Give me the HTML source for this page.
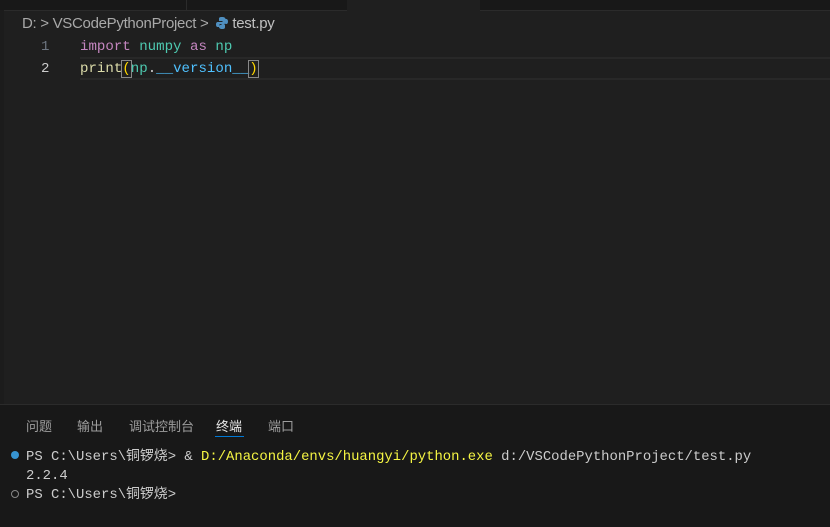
<!DOCTYPE html>
<html><head><meta charset="utf-8"><style>
body{margin:0;width:830px;height:526px;background:#1f1f1f;overflow:hidden;position:relative;font-family:"Liberation Sans","Noto Sans CJK SC",sans-serif}
.abs{position:absolute}
.mono{font-family:"Liberation Mono","Noto Sans CJK SC",monospace;font-size:14.1px;white-space:pre}
</style></head><body>
<div class="abs" style="left:0;top:0;width:830px;height:10px;background:#181818;border-bottom:1px solid #2b2b2b"></div>
<div class="abs" style="left:186px;top:0;width:1px;height:10px;background:#2b2b2b"></div>
<div class="abs" style="left:347px;top:0;width:133px;height:11px;background:#1f1f1f"></div>
<div class="abs" style="left:0;top:85px;width:4px;height:22px;background:#2a2a2a"></div>
<div class="abs" style="left:0;top:10px;width:4px;height:395px;background:#1c1c1c"></div>
<div class="abs" style="left:22px;top:15px;font-size:15px;letter-spacing:-0.3px;color:#a9a9a9">D: &gt; VSCodePythonProject &gt; <svg width="14" height="14" viewBox="0 0 14 14" style="vertical-align:-2px;margin:0 3px"><path d="M7 1C4 1 4 2 4 3v2h3.5v1H3C1.5 6 1 7 1 8.5S1.5 11 3 11h1V9.5C4 8.5 5 8 6 8h3c1 0 1.5-.5 1.5-1.5V3c0-1-1-2-3.5-2z" fill="#4f8fc0"/><path d="M7 13c3 0 3-1 3-2V9H6.5V8H11c1.5 0 2-1 2-2.5S12.5 3 11 3h-.5v3.5C10.5 8 9.5 9 8 9H5c-.5 0-1 .5-1 1v1c0 1 1 2 3 2z" fill="#4f8fc0"/></svg><span style="color:#c0c0c0">test.py</span></div>
<div class="abs" style="left:80px;top:57px;width:750px;height:19px;border-top:2px solid #282828;border-bottom:2px solid #282828"></div>
<div class="abs mono" style="left:41px;top:39px;color:#6e7681">1</div>
<div class="abs mono" style="left:41px;top:61px;color:#cccccc">2</div>
<div class="abs mono" style="left:80px;top:39px"><span style="color:#c586c0">import</span> <span style="color:#4ec9b0">numpy</span> <span style="color:#c586c0">as</span> <span style="color:#4ec9b0">np</span></div>
<div class="abs mono" style="left:80px;top:61px"><span style="color:#dcdcaa">print</span><span style="color:#ffd700;outline:1px solid #888">(</span><span style="color:#4ec9b0">np</span><span style="color:#ccc">.</span><span style="color:#4fc1ff">__version__</span><span style="color:#ffd700;outline:1px solid #888">)</span></div>
<div class="abs" style="left:0;top:404px;width:830px;height:122px;background:#181818;border-top:1px solid #2b2b2b"></div>
<div class="abs" style="left:26px;top:416px;font-size:13px;color:#9d9d9d">问题</div>
<div class="abs" style="left:77px;top:416px;font-size:13px;color:#9d9d9d">输出</div>
<div class="abs" style="left:129px;top:416px;font-size:13px;color:#9d9d9d">调试控制台</div>
<div class="abs" style="left:216px;top:416px;font-size:13px;color:#e7e7e7">终端</div>
<div class="abs" style="left:215px;top:436px;width:29px;height:1px;background:#0078d4"></div>
<div class="abs" style="left:268px;top:416px;font-size:13px;color:#9d9d9d">端口</div>
<div class="abs" style="left:11px;top:451px;width:8px;height:8px;border-radius:50%;background:#3794d1"></div>
<div class="abs" style="left:11px;top:490px;width:6px;height:6px;border-radius:50%;border:1px solid #888"></div>
<div class="abs mono" style="left:26px;top:448px;color:#cccccc;line-height:19px;font-size:13.9px">PS C:\Users\铜锣烧&gt; &amp; <span style="color:#f5f543">D:/Anaconda/envs/huangyi/python.exe</span> d:/VSCodePythonProject/test.py
2.2.4
PS C:\Users\铜锣烧&gt;</div>
</body></html>
